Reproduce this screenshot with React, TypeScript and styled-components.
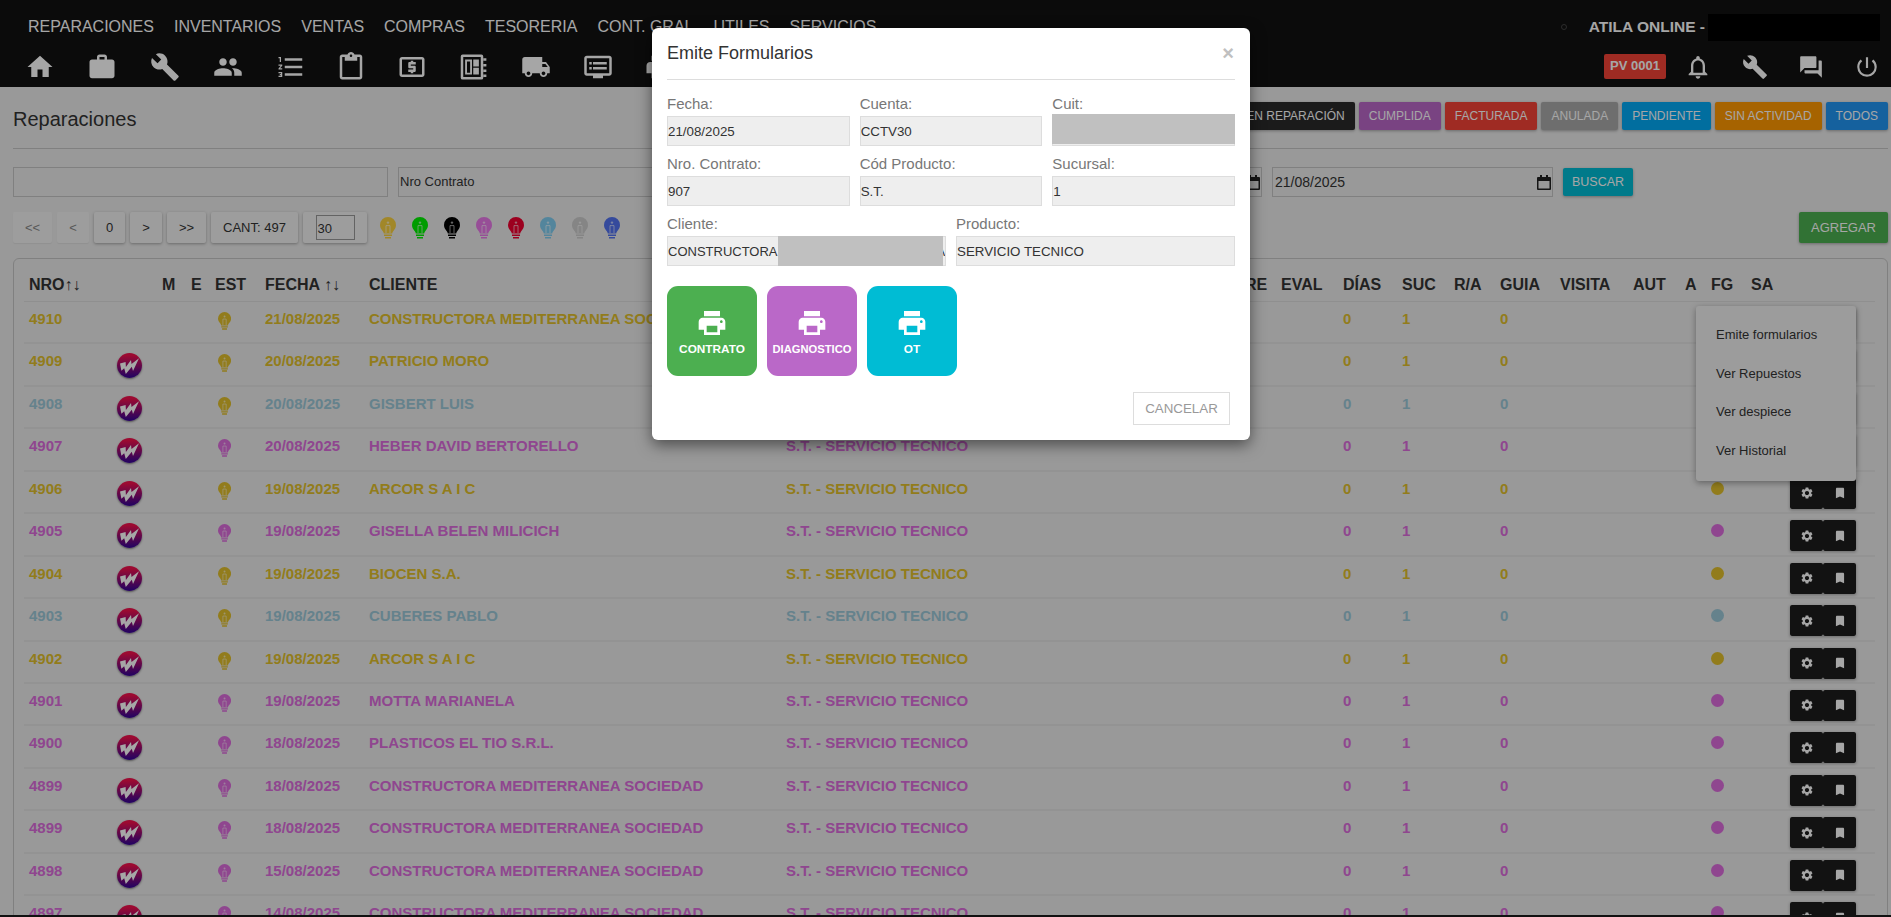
import { ReactNode } from "react";
import styled, { createGlobalStyle } from "styled-components";
import {
  MdBookmark,
  MdBuild,
  MdContentPaste,
  MdDvr,
  MdFormatListNumbered,
  MdHome,
  MdLocalAtm,
  MdLocalShipping,
  MdNotificationsNone,
  MdPeople,
  MdPowerSettingsNew,
  MdPrint,
  MdQuestionAnswer,
  MdSettings,
  MdWork,
} from "react-icons/md";

const YELLOW = "#e0bf2c";
const VIOLET = "#dc6cdc";
const SKY = "#9cc8d8";

const COLUMNS =
  "83px 50px 29px 24px 50px 104px 417px 459px 36px 62px 59px 52px 46px 60px 73px 52px 26px 40px 39px 66px 15px";

const GlobalStyle = createGlobalStyle`
  html, body {
    margin: 0;
    height: 100%;
    overflow: hidden;
    background: #ebebeb;
    font-family: "Liberation Sans", Arial, sans-serif;
  }
  * { box-sizing: border-box; }
`;

const Screen = styled.div`
  position: relative;
  height: 917px;
  overflow: hidden;
`;

const Header = styled.header`
  height: 87px;
  background: #111;
  color: #fff;
`;

const HeaderTop = styled.div`
  display: flex;
  justify-content: space-between;
  align-items: center;
  height: 46px;
  padding: 8px 11px 0 28px;
`;

const MainMenu = styled.nav`
  display: flex;
  gap: 20px;
  font-size: 16px;
`;

const Status = styled.div`
  display: flex;
  align-items: center;
  font-size: 15.5px;
  font-weight: 700;
`;

const StatusDot = styled.span`
  width: 6px;
  height: 6px;
  margin-right: 22px;
  border: 1px solid #444;
  border-radius: 50%;
`;

const Redacted = styled.span`
  width: 172px;
  height: 27px;
  margin-left: 3px;
  background: #000;
`;

const HeaderBottom = styled.div`
  display: flex;
  justify-content: space-between;
  align-items: center;
  height: 41px;
  padding: 0 11px 0 9px;
`;

const IconBar = styled.div`
  display: flex;
`;

const IconSlot = styled.span<{ $width: number }>`
  display: flex;
  justify-content: center;
  width: ${(p) => p.$width}px;
`;

const Tools = styled.div`
  display: flex;
  align-items: center;
  gap: 30px;
`;

const Badge = styled.span`
  width: 62px;
  height: 25px;
  margin-right: -12px;
  background: #f44336;
  border-radius: 2px;
  font-size: 13px;
  font-weight: 700;
  line-height: 24px;
  text-align: center;
`;

const Content = styled.main`
  padding: 15px 3px 0 13px;
`;

const TitleRow = styled.div`
  display: flex;
  justify-content: space-between;
  height: 28px;
`;

const Title = styled.h1`
  margin: 3px 0 0;
  font-size: 20px;
  font-weight: 400;
  line-height: 28px;
  color: #333;
`;

const StateButtons = styled.div`
  display: flex;
  gap: 4px;
`;

const StateButton = styled.button<{ $bg: string }>`
  height: 28px;
  padding: 0 10px;
  border: 0;
  border-radius: 2px;
  background: ${(p) => p.$bg};
  color: #fff;
  font: 12px "Liberation Sans", Arial, sans-serif;
  box-shadow: 0 1px 3px rgba(0, 0, 0, 0.3);
`;

const Rule = styled.hr`
  margin: 18px 0 0;
  border: 0;
  border-top: 1px solid #c5c5c5;
`;

const Filters = styled.div`
  display: flex;
  align-items: center;
  gap: 10px;
  margin-top: 18px;
`;

const Field = styled.div<{ $width: number }>`
  display: flex;
  justify-content: space-between;
  align-items: center;
  width: ${(p) => p.$width}px;
  height: 30px;
  padding: 0 1px 2px;
  border: 1px solid #c5c5c5;
  font-size: 13px;
  color: #333;
`;

const DateField = styled(Field)`
  padding: 0 1px 0 2px;
  font-size: 14px;
`;

const SearchButton = styled.button`
  width: 70px;
  height: 28px;
  border: 0;
  border-radius: 2px;
  background: #00bcd4;
  color: #fff;
  font: 12.5px "Liberation Sans", Arial, sans-serif;
  box-shadow: 0 1px 3px rgba(0, 0, 0, 0.3);
`;

const Pager = styled.div`
  display: flex;
  align-items: center;
  gap: 5px;
  margin-top: 15px;
`;

const PageButton = styled.button<{ $width: number; $muted?: boolean }>`
  width: ${(p) => p.$width}px;
  height: 31px;
  padding: 0;
  border: 0;
  border-radius: 2px;
  background: #f2f2f2;
  color: ${(p) => (p.$muted ? "#888" : "#333")};
  font: 13px "Liberation Sans", Arial, sans-serif;
  box-shadow: ${(p) => (p.$muted ? "0 1px 1px rgba(0,0,0,.06)" : "0 1px 3px rgba(0,0,0,.3)")};
`;

const SizeBox = styled.div`
  display: flex;
  align-items: center;
  justify-content: center;
  width: 64px;
  height: 31px;
  border-radius: 2px;
  background: #f2f2f2;
  box-shadow: 0 1px 3px rgba(0, 0, 0, 0.3);
`;

const SizeInput = styled.div`
  width: 39px;
  height: 25px;
  padding-left: 1px;
  border: 1px solid #999;
  font-size: 13px;
  line-height: 25px;
  color: #333;
`;

const Legend = styled.div`
  display: flex;
  gap: 16px;
  margin-left: 8px;
`;

const AddButton = styled.button`
  width: 89px;
  height: 31px;
  margin-left: auto;
  border: 0;
  border-radius: 2px;
  background: #4caf50;
  color: #fff;
  font: 13px "Liberation Sans", Arial, sans-serif;
  box-shadow: 0 1px 3px rgba(0, 0, 0, 0.3);
`;

const Card = styled.section`
  margin-top: 15px;
  padding: 0 12px 0 10px;
  border: 1px solid #c5c5c5;
  border-radius: 6px;
`;

const TableHead = styled.div`
  display: grid;
  grid-template-columns: ${COLUMNS};
  height: 43px;
  padding: 17px 0 0 5px;
  border-bottom: 1px solid #dcdcdc;
  font-size: 16px;
  font-weight: 700;
  line-height: 18px;
  color: #333;
  white-space: nowrap;
`;

const TableRow = styled.div<{ $color: string }>`
  display: grid;
  grid-template-columns: ${COLUMNS};
  align-items: start;
  height: 42.45px;
  padding: 8px 0 0 5px;
  border-bottom: 2px solid #e2e2e2;
  color: ${(p) => p.$color};
  font-size: 15px;
  font-weight: 700;
  line-height: 17px;
  white-space: nowrap;
`;

const LogoBadge = styled.span`
  display: block;
  width: 25px;
  height: 25px;
  margin: 1px 0 0 5px;
  border-radius: 50%;
  box-shadow: 0 1px 2px rgba(0, 0, 0, 0.45);
`;

const RowBulb = styled.span`
  display: block;
  margin: 2px 0 0 3px;
`;

const Dot = styled.span<{ $color: string }>`
  display: block;
  width: 13px;
  height: 13px;
  margin-top: 2px;
  border-radius: 50%;
  background: ${(p) => p.$color};
`;

const ActionGroup = styled.div`
  display: flex;
  margin-top: -2px;
  box-shadow: 0 1px 3px rgba(0, 0, 0, 0.3);
`;

const ActionButton = styled.button`
  display: flex;
  align-items: center;
  justify-content: center;
  width: 33px;
  height: 31px;
  padding: 0;
  border: 0;
  border-radius: 2px;
  background: #1c1c1c;
  color: #fff;
`;

const RowMenu = styled.ul`
  position: absolute;
  top: 306px;
  left: 1696px;
  width: 160px;
  height: 175px;
  margin: 0;
  padding: 10px 0 0;
  list-style: none;
  background: #f0f0f0;
  border-radius: 3px;
  box-shadow: 0 2px 6px rgba(0, 0, 0, 0.35);
`;

const RowMenuItem = styled.li`
  height: 38.7px;
  padding-left: 20px;
  font-size: 13px;
  line-height: 38px;
  color: #333;
`;

const Backdrop = styled.div`
  position: absolute;
  inset: 0;
  background: rgba(0, 0, 0, 0.35);
`;

const BottomEdge = styled.div`
  position: absolute;
  left: 0;
  right: 0;
  bottom: 0;
  height: 2px;
  background: #111;
`;

const Modal = styled.div`
  position: absolute;
  top: 28px;
  left: 652px;
  width: 598px;
  height: 412px;
  padding: 0 15px;
  background: #fff;
  border-radius: 6px;
  box-shadow: 0 5px 15px rgba(0, 0, 0, 0.5);
`;

const ModalHead = styled.div`
  display: flex;
  justify-content: space-between;
  align-items: center;
  height: 52px;
  border-bottom: 1px solid #ddd;
`;

const ModalTitle = styled.h2`
  margin: 0;
  font-size: 18px;
  font-weight: 400;
  color: #333;
`;

const CloseMark = styled.span`
  margin-right: 1px;
  font-size: 20px;
  font-weight: 700;
  color: #c0c0c0;
`;

const FormRow = styled.div<{ $columns: number }>`
  display: grid;
  grid-template-columns: repeat(${(p) => p.$columns}, 1fr);
  gap: 10px;
  margin-top: 9px;
`;

const FirstRow = styled(FormRow)`
  margin-top: 15px;
`;

const FormField = styled.label`
  position: relative;
  display: block;
  font-size: 15px;
  line-height: 17px;
  color: #777;
`;

const ReadOnlyInput = styled.input<{ $tight?: boolean }>`
  display: block;
  width: 100%;
  height: 30px;
  margin-top: 4px;
  padding: 1px 0;
  border: 1px solid #ddd;
  background: #eee;
  font: ${(p) => (p.$tight ? "13px" : "13.33px")} "Liberation Sans", Arial, sans-serif;
  color: #333;
  outline: none;
`;

const Censor = styled.span<{ $left: number; $width: number; $top: number }>`
  position: absolute;
  top: ${(p) => p.$top}px;
  left: ${(p) => p.$left}px;
  width: ${(p) => p.$width}px;
  height: 30px;
  background: #c0c0c0;
`;

const PrintButtons = styled.div`
  display: flex;
  gap: 10px;
  margin-top: 20px;
`;

const PrintButton = styled.button<{ $bg: string; $small?: boolean }>`
  display: flex;
  flex-direction: column;
  align-items: center;
  gap: 2px;
  width: 90px;
  height: 90px;
  padding: 21px 0 0;
  border: 0;
  border-radius: 11px;
  background: ${(p) => p.$bg};
  color: #fff;
  font: 700 ${(p) => (p.$small ? "11.2px" : "11.8px")} "Liberation Sans", Arial, sans-serif;
  line-height: 16px;
`;

const ModalFooter = styled.div`
  display: flex;
  justify-content: flex-end;
  margin-top: 16px;
  padding-right: 5px;
`;

const CancelButton = styled.button`
  width: 97px;
  height: 33px;
  border: 1px solid #ddd;
  background: #fff;
  color: #999;
  font: 13.33px "Liberation Sans", Arial, sans-serif;
`;

function Bulb({ color, height }: { color: string; height: number }) {
  return (
    <svg width={(height * 16) / 22} height={height} viewBox="0 0 16 22" style={{ display: "block" }}>
      <path
        fill={color}
        d="M8 0a8 8 0 0 1 8 8c0 2.8-1.4 4.4-2.6 5.9-.7.9-1.1 1.6-1.2 2.6H3.8c-.1-1-.5-1.7-1.2-2.6C1.4 12.4 0 10.8 0 8a8 8 0 0 1 8-8z"
      />
      <path fill={color} d="M4 17.4h8v1.6H4zM5 20h6v1.6H5z" />
      <circle cx="8" cy="5.6" r="1.2" fill="#fff" fillOpacity="0.6" />
      <path d="M6 16V8.6h4V16" fill="none" stroke="#fff" strokeOpacity="0.6" strokeWidth="1" />
    </svg>
  );
}

function BrandLogo({ id }: { id: string }) {
  return (
    <LogoBadge>
      <svg width="25" height="25" viewBox="0 0 25 25" style={{ display: "block" }}>
        <defs>
          <linearGradient id={id} x1="0" y1="0" x2="0" y2="1">
            <stop offset="0.1" stopColor="#f0104c" />
            <stop offset="0.95" stopColor="#3c0694" />
          </linearGradient>
        </defs>
        <circle cx="12.5" cy="12.5" r="12.5" fill={`url(#${id})`} />
        <path
          fill="#fff"
          d="M3 10.5l5.6-1.4.3 4.8 5.1-7 .5 4.2 7.5-5.8-6 12.6-1.2-4.2-6 7.2-1.6-5.6-2.8 2.4z"
        />
      </svg>
    </LogoBadge>
  );
}

function NotebookIcon() {
  return (
    <svg width="32" height="30" viewBox="0 0 25.6 24" fill="currentColor">
      <path d="M4.5 2h15A1.5 1.5 0 0 1 21 3.5v17a1.5 1.5 0 0 1-1.5 1.5h-15A1.5 1.5 0 0 1 3 20.5v-17A1.5 1.5 0 0 1 4.5 2zM5 4v16h14V4z" fillRule="evenodd" />
      <path d="M6.5 6H12v12H6.5zM8 7.5v9h2.5v-9zM13 6h4.5v5.5H13zM13 12.5h4.5V18H13z" fillRule="evenodd" />
      <path d="M21 5h2.5v2H21zM21 9.5h2.5v2H21zM21 14h2.5v2H21zM21 18h2.5v2H21z" />
    </svg>
  );
}

function CalendarGlyph() {
  return (
    <svg width="14" height="15" viewBox="0 0 14 15" fill="#222">
      <path d="M3 0h2v2h4V0h2v2h2a1 1 0 0 1 1 1v11a1 1 0 0 1-1 1H1a1 1 0 0 1-1-1V3a1 1 0 0 1 1-1h2zM1.5 6v7.5h11V6z" fillRule="evenodd" />
    </svg>
  );
}

const menuItems = [
  "REPARACIONES",
  "INVENTARIOS",
  "VENTAS",
  "COMPRAS",
  "TESORERIA",
  "CONT. GRAL",
  "UTILES",
  "SERVICIOS",
];

const headerIcons: { icon: ReactNode; width: number }[] = [
  { icon: <MdHome size={30} />, width: 62 },
  { icon: <MdWork size={30} />, width: 62 },
  { icon: <MdBuild size={30} />, width: 63 },
  { icon: <MdPeople size={30} />, width: 64 },
  { icon: <MdFormatListNumbered size={30} />, width: 61 },
  { icon: <MdContentPaste size={30} />, width: 60 },
  { icon: <MdLocalAtm size={30} />, width: 61 },
  { icon: <NotebookIcon />, width: 62 },
  { icon: <MdLocalShipping size={30} />, width: 63 },
  { icon: <MdDvr size={30} />, width: 62 },
  { icon: <MdPrint size={30} />, width: 60 },
];

const stateButtons = [
  { label: "EN REPARACIÓN", bg: "#2a2a2a" },
  { label: "CUMPLIDA", bg: "#ba68c8" },
  { label: "FACTURADA", bg: "#f44336" },
  { label: "ANULADA", bg: "#aaa" },
  { label: "PENDIENTE", bg: "#03a9f4" },
  { label: "SIN ACTIVIDAD", bg: "#ff9800" },
  { label: "TODOS", bg: "#2196f3" },
];

const legendColors = ["#f8d040", "#00f000", "#000", "#e878e8", "#f00030", "#80cdf0", "#ccc", "#5272f0"];

const headings = [
  "NRO↑↓", "", "M", "E", "EST", "FECHA ↑↓", "CLIENTE", "PRODUCTO", "RE", "EVAL",
  "DÍAS", "SUC", "R/A", "GUIA", "VISITA", "AUT", "A", "FG", "SA", "", "",
];

type Repair = {
  nro: number;
  date: string;
  client: string;
  color: string;
  bulb: string;
  logo?: boolean;
};

const CM = "CONSTRUCTORA MEDITERRANEA SOCIEDAD";

const repairs: Repair[] = [
  { nro: 4910, date: "21/08/2025", client: CM, color: YELLOW, bulb: YELLOW, logo: false },
  { nro: 4909, date: "20/08/2025", client: "PATRICIO MORO", color: YELLOW, bulb: YELLOW },
  { nro: 4908, date: "20/08/2025", client: "GISBERT LUIS", color: SKY, bulb: YELLOW },
  { nro: 4907, date: "20/08/2025", client: "HEBER DAVID BERTORELLO", color: VIOLET, bulb: VIOLET },
  { nro: 4906, date: "19/08/2025", client: "ARCOR S A I C", color: YELLOW, bulb: YELLOW },
  { nro: 4905, date: "19/08/2025", client: "GISELLA BELEN MILICICH", color: VIOLET, bulb: VIOLET },
  { nro: 4904, date: "19/08/2025", client: "BIOCEN S.A.", color: YELLOW, bulb: YELLOW },
  { nro: 4903, date: "19/08/2025", client: "CUBERES PABLO", color: SKY, bulb: YELLOW },
  { nro: 4902, date: "19/08/2025", client: "ARCOR S A I C", color: YELLOW, bulb: YELLOW },
  { nro: 4901, date: "19/08/2025", client: "MOTTA MARIANELA", color: VIOLET, bulb: VIOLET },
  { nro: 4900, date: "18/08/2025", client: "PLASTICOS EL TIO S.R.L.", color: VIOLET, bulb: VIOLET },
  { nro: 4899, date: "18/08/2025", client: CM, color: VIOLET, bulb: VIOLET },
  { nro: 4899, date: "18/08/2025", client: CM, color: VIOLET, bulb: VIOLET },
  { nro: 4898, date: "15/08/2025", client: CM, color: VIOLET, bulb: VIOLET },
  { nro: 4897, date: "14/08/2025", client: CM, color: VIOLET, bulb: VIOLET },
];

export default function App() {
  return (
    <Screen>
      <GlobalStyle />
      <Header>
        <HeaderTop>
          <MainMenu>
            {menuItems.map((item) => (
              <span key={item}>{item}</span>
            ))}
          </MainMenu>
          <Status>
            <StatusDot />
            ATILA ONLINE -
            <Redacted />
          </Status>
        </HeaderTop>
        <HeaderBottom>
          <IconBar>
            {headerIcons.map((item, i) => (
              <IconSlot key={i} $width={item.width}>
                {item.icon}
              </IconSlot>
            ))}
          </IconBar>
          <Tools>
            <Badge>PV 0001</Badge>
            <MdNotificationsNone size={28} />
            <MdBuild size={26} />
            <MdQuestionAnswer size={26} />
            <MdPowerSettingsNew size={26} />
          </Tools>
        </HeaderBottom>
      </Header>

      <Content>
        <TitleRow>
          <Title>Reparaciones</Title>
          <StateButtons>
            {stateButtons.map((b) => (
              <StateButton key={b.label} $bg={b.bg}>
                {b.label}
              </StateButton>
            ))}
          </StateButtons>
        </TitleRow>
        <Rule />

        <Filters>
          <Field $width={375} />
          <Field $width={427}>Nro Contrato</Field>
          <DateField $width={427}>
            21/08/2025
            <CalendarGlyph />
          </DateField>
          <DateField $width={281}>
            21/08/2025
            <CalendarGlyph />
          </DateField>
          <SearchButton>BUSCAR</SearchButton>
        </Filters>

        <Pager>
          <PageButton $width={39} $muted>&lt;&lt;</PageButton>
          <PageButton $width={32} $muted>&lt;</PageButton>
          <PageButton $width={31}>0</PageButton>
          <PageButton $width={32}>&gt;</PageButton>
          <PageButton $width={39}>&gt;&gt;</PageButton>
          <PageButton $width={87}>CANT: 497</PageButton>
          <SizeBox>
            <SizeInput>30</SizeInput>
          </SizeBox>
          <Legend>
            {legendColors.map((c) => (
              <Bulb key={c} color={c} height={22} />
            ))}
          </Legend>
          <AddButton>AGREGAR</AddButton>
        </Pager>

        <Card>
          <TableHead>
            {headings.map((h, i) => (
              <span key={i}>{h}</span>
            ))}
          </TableHead>
          {repairs.map((r, i) => (
            <TableRow key={i} $color={r.color}>
              <span>{r.nro}</span>
              <span>{r.logo === false ? null : <BrandLogo id={`logo-${i}`} />}</span>
              <span />
              <span />
              <RowBulb>
                <Bulb color={r.bulb} height={18} />
              </RowBulb>
              <span>{r.date}</span>
              <span>{r.client}</span>
              <span>S.T. - SERVICIO TECNICO</span>
              <span />
              <span />
              <span>0</span>
              <span>1</span>
              <span />
              <span>0</span>
              <span />
              <span />
              <span />
              <Dot $color={r.color} />
              <span />
              <ActionGroup>
                <ActionButton>
                  <MdSettings size={14} />
                </ActionButton>
                <ActionButton>
                  <MdBookmark size={14} />
                </ActionButton>
              </ActionGroup>
              <span />
            </TableRow>
          ))}
        </Card>
      </Content>

      <RowMenu>
        <RowMenuItem>Emite formularios</RowMenuItem>
        <RowMenuItem>Ver Repuestos</RowMenuItem>
        <RowMenuItem>Ver despiece</RowMenuItem>
        <RowMenuItem>Ver Historial</RowMenuItem>
      </RowMenu>

      <Backdrop />
      <BottomEdge />

      <Modal>
        <ModalHead>
          <ModalTitle>Emite Formularios</ModalTitle>
          <CloseMark>×</CloseMark>
        </ModalHead>
        <FirstRow $columns={3}>
          <FormField>
            Fecha:
            <ReadOnlyInput readOnly value="21/08/2025" />
          </FormField>
          <FormField>
            Cuenta:
            <ReadOnlyInput readOnly value="CCTV30" />
          </FormField>
          <FormField>
            Cuit:
            <ReadOnlyInput readOnly value="" />
            <Censor $left={0} $width={183} $top={19} />
          </FormField>
        </FirstRow>
        <FormRow $columns={3}>
          <FormField>
            Nro. Contrato:
            <ReadOnlyInput readOnly value="907" />
          </FormField>
          <FormField>
            Cód Producto:
            <ReadOnlyInput readOnly value="S.T." />
          </FormField>
          <FormField>
            Sucursal:
            <ReadOnlyInput readOnly value="1" />
          </FormField>
        </FormRow>
        <FormRow $columns={2}>
          <FormField>
            Cliente:
            <ReadOnlyInput readOnly $tight value="CONSTRUCTORA MEDITERRANEA SOCIEDAD ANONIMA" />
            <Censor $left={111} $width={165} $top={21} />
          </FormField>
          <FormField>
            Producto:
            <ReadOnlyInput readOnly value="SERVICIO TECNICO" />
          </FormField>
        </FormRow>
        <PrintButtons>
          <PrintButton $bg="#4caf50">
            <MdPrint size={32} />
            CONTRATO
          </PrintButton>
          <PrintButton $bg="#ba68c8" $small>
            <MdPrint size={32} />
            DIAGNOSTICO
          </PrintButton>
          <PrintButton $bg="#00bcd4">
            <MdPrint size={32} />
            OT
          </PrintButton>
        </PrintButtons>
        <ModalFooter>
          <CancelButton>CANCELAR</CancelButton>
        </ModalFooter>
      </Modal>
    </Screen>
  );
}
